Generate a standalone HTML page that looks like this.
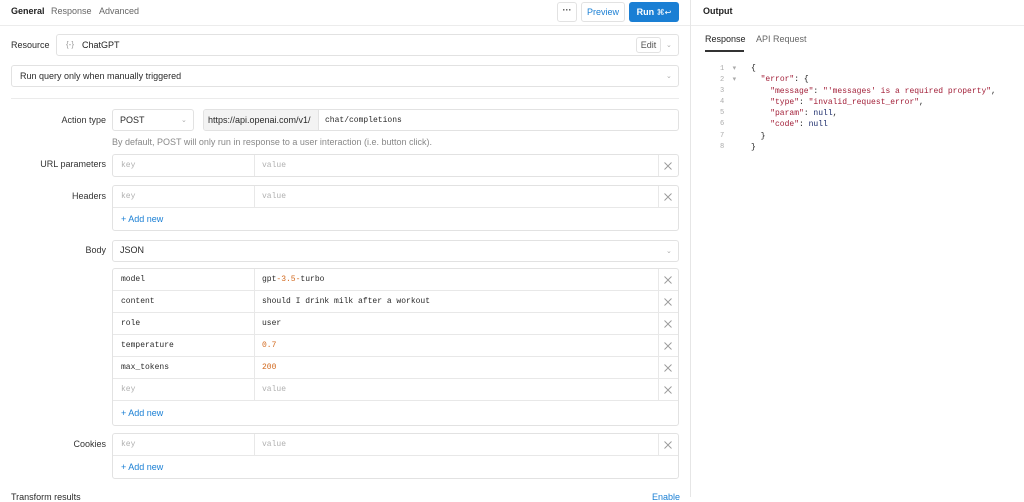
<!DOCTYPE html>
<html><head><meta charset="utf-8"><style>
*{box-sizing:border-box;margin:0;padding:0}
body{width:1024px;height:497px;overflow:hidden;background:#fff;font-family:"Liberation Sans",sans-serif;font-size:9px;color:#2a2a2a;position:relative}
.a{position:absolute}
.box{position:absolute;border:1px solid #e2e2e2;border-radius:3px;background:#fff}
.lbl{position:absolute;text-align:right;width:106px;left:0;font-size:9px;color:#333}
.mono{font-family:"Liberation Mono",monospace;font-size:8px}
.ph{color:#b0b0b0}
.row{position:absolute;left:0;right:0;height:22px;border-bottom:1px solid #e8e8e8}
.row .k{position:absolute;left:8px;top:6px}
.row .v{position:absolute;left:149px;top:6px}
.row .c1{position:absolute;left:141px;top:0;bottom:0;border-left:1px solid #e8e8e8}
.row .c2{position:absolute;left:545px;top:0;bottom:0;border-left:1px solid #e8e8e8}
.row .x{position:absolute;right:6px;top:7px;width:8px;height:8px}
.add{position:absolute;left:8px;color:#1a7fd4;font-size:9px}
.chev{position:absolute;color:#aaa;font-size:7px}
.code div{height:11.3px;white-space:pre}
.s{color:#a3213a}.n{color:#1a2a6a}
</style></head><body>
<svg width="0" height="0" style="position:absolute"><defs><g id="x"><path d="M0.5 0.5L7.5 7.5M7.5 0.5L0.5 7.5" stroke="#9a9a9a" stroke-width="0.9" fill="none"/></g></defs></svg>
<div class="a" style="left:0;top:0;width:690px;height:26px;border-bottom:1px solid #ececec"></div>
<div class="a" style="left:11px;top:6px;font-weight:bold;color:#222">General</div>
<div class="a" style="left:51px;top:6px;color:#666">Response</div>
<div class="a" style="left:99px;top:6px;color:#666">Advanced</div>
<div class="box" style="left:557px;top:2px;width:20px;height:20px;text-align:center;line-height:15px;font-weight:bold;color:#444">···</div>
<div class="box" style="left:581px;top:2px;width:44px;height:20px;text-align:center;line-height:18px;color:#1a7fd4">Preview</div>
<div class="a" style="left:629px;top:2px;width:50px;height:20px;border-radius:3px;background:#1a7fd4;color:#fff;text-align:center;line-height:20px;font-weight:bold">Run <span style="font-weight:normal;font-size:8px">⌘↩</span></div>
<div class="a" style="left:690px;top:0;width:1px;height:497px;background:#e6e6e6"></div>

<div class="a" style="left:11px;top:40px">Resource</div>
<div class="box" style="left:56px;top:34px;width:623px;height:22px"></div>
<div class="a" style="left:66px;top:40px;color:#999;font-size:8px">{-}</div>
<div class="a" style="left:82px;top:40px;color:#222">ChatGPT</div>
<div class="box" style="left:636px;top:37px;width:25px;height:16px;text-align:center;line-height:14px;color:#555">Edit</div>
<div class="chev" style="left:666px;top:41px">⌄</div>
<div class="box" style="left:11px;top:65px;width:668px;height:22px"></div>
<div class="a" style="left:20px;top:71px">Run query only when manually triggered</div>
<div class="chev" style="left:666px;top:72px">⌄</div>
<div class="a" style="left:11px;top:98px;width:668px;height:1px;background:#ebebeb"></div>

<div class="lbl" style="top:115px">Action type</div>
<div class="box" style="left:112px;top:109px;width:82px;height:22px"></div>
<div class="a" style="left:120px;top:115px">POST</div>
<div class="chev" style="left:181px;top:116px">⌄</div>
<div class="box" style="left:203px;top:109px;width:476px;height:22px;overflow:hidden"><div class="a" style="left:0;top:0;width:115px;height:20px;background:#f3f3f3;border-right:1px solid #e2e2e2"></div></div>
<div class="a" style="left:208px;top:115px">https://api.openai.com/v1/</div>
<div class="a mono" style="left:325px;top:116px">chat/completions</div>
<div class="a" style="left:112px;top:137px;color:#888">By default, POST will only run in response to a user interaction (i.e. button click).</div>

<div class="lbl" style="top:159px">URL parameters</div>
<div class="box" style="left:112px;top:154px;width:567px;height:23px;overflow:hidden">
<div class="row" style="top:0;border:0"><span class="k mono ph">key</span><span class="c1"></span><span class="v mono ph">value</span><span class="c2"></span><svg class="x"><use href="#x"/></svg></div></div>

<div class="lbl" style="top:191px">Headers</div>
<div class="box" style="left:112px;top:185px;width:567px;height:46px;overflow:hidden">
<div class="row" style="top:0"><span class="k mono ph">key</span><span class="c1"></span><span class="v mono ph">value</span><span class="c2"></span><svg class="x"><use href="#x"/></svg></div>
<div class="add" style="top:28px">+ Add new</div></div>

<div class="lbl" style="top:245px">Body</div>
<div class="box" style="left:112px;top:240px;width:567px;height:22px"></div>
<div class="a" style="left:120px;top:245px">JSON</div>
<div class="chev" style="left:666px;top:247px">⌄</div>

<div class="box" style="left:112px;top:268px;width:567px;height:158px;overflow:hidden">
<div class="row" style="top:0"><span class="k mono">model</span><span class="c1"></span><span class="v mono">gpt<span style="color:#d2691e">-3.5-</span>turbo</span><span class="c2"></span><svg class="x"><use href="#x"/></svg></div>
<div class="row" style="top:22px"><span class="k mono">content</span><span class="c1"></span><span class="v mono">should I drink milk after a workout</span><span class="c2"></span><svg class="x"><use href="#x"/></svg></div>
<div class="row" style="top:44px"><span class="k mono">role</span><span class="c1"></span><span class="v mono">user</span><span class="c2"></span><svg class="x"><use href="#x"/></svg></div>
<div class="row" style="top:66px"><span class="k mono">temperature</span><span class="c1"></span><span class="v mono" style="color:#d2691e">0.7</span><span class="c2"></span><svg class="x"><use href="#x"/></svg></div>
<div class="row" style="top:88px"><span class="k mono">max_tokens</span><span class="c1"></span><span class="v mono" style="color:#d2691e">200</span><span class="c2"></span><svg class="x"><use href="#x"/></svg></div>
<div class="row" style="top:110px"><span class="k mono ph">key</span><span class="c1"></span><span class="v mono ph">value</span><span class="c2"></span><svg class="x"><use href="#x"/></svg></div>
<div class="add" style="top:139px">+ Add new</div></div>

<div class="lbl" style="top:439px">Cookies</div>
<div class="box" style="left:112px;top:433px;width:567px;height:46px;overflow:hidden">
<div class="row" style="top:0"><span class="k mono ph">key</span><span class="c1"></span><span class="v mono ph">value</span><span class="c2"></span><svg class="x"><use href="#x"/></svg></div>
<div class="add" style="top:28px">+ Add new</div></div>
<div class="a" style="left:11px;top:492px">Transform results</div>
<div class="a" style="left:652px;top:492px;color:#1a7fd4">Enable</div>

<div class="a" style="left:691px;top:0;width:333px;height:26px;border-bottom:1px solid #ececec"></div>
<div class="a" style="left:703px;top:6px;font-weight:bold;color:#222">Output</div>
<div class="a" style="left:705px;top:34px;color:#222">Response</div>
<div class="a" style="left:705px;top:50px;width:39px;height:2px;background:#333"></div>
<div class="a" style="left:756px;top:34px;color:#666">API Request</div>
<div class="a mono code" style="left:720px;top:64px;color:#aaa;font-size:7px">
<div>1  ▾</div><div>2  ▾</div><div>3</div><div>4</div><div>5</div><div>6</div><div>7</div><div>8</div></div>
<div class="a mono code" style="left:751px;top:64px;color:#222">
<div>{</div>
<div>  <span class="s">"error"</span>: {</div>
<div>    <span class="s">"message"</span>: <span class="s">"'messages' is a required property"</span>,</div>
<div>    <span class="s">"type"</span>: <span class="s">"invalid_request_error"</span>,</div>
<div>    <span class="s">"param"</span>: <span class="n">null</span>,</div>
<div>    <span class="s">"code"</span>: <span class="n">null</span></div>
<div>  }</div>
<div>}</div></div>
</body></html>
